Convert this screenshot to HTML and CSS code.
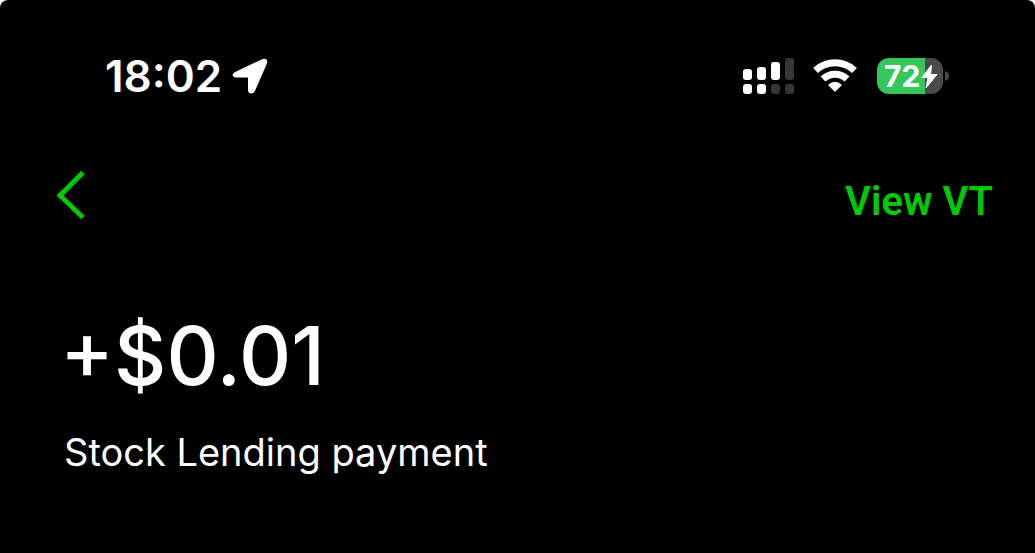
FILE: index.html
```html
<!doctype html>
<html lang="en">
<head>
	<title>Stock Lending payment</title>

	<meta charset="utf-8" />
	<meta name="viewport" content="width=device-width, initial-scale=1" />

	<link rel="stylesheet" href="styles.css">
</head>

<body>
	<div class="screen">
		<div class="statusbar">
			<div class="clock">
				<span>18:02</span>
				<svg class="location" width="36" height="36" viewBox="0 0 36 36" aria-hidden="true">
					<path d="M3.500 16 31 3Q34 2 33 5L21 32.500Q19 34.500 18 32.500V19Q18 17.500 16.500 17.500H4Q1.500 17.500 3.500 16Z" fill="#fff" stroke="#fff" stroke-width="4" stroke-linejoin="round"/>
				</svg>
			</div>

			<div class="indicators">
				<!-- two sim cards: bars on top, dots below -->
				<svg class="signal" width="51" height="36" viewBox="0 0 51 36" role="img" aria-label="Signal">
					<g fill="#fff">
						<rect x="0" y="11" width="9" height="11" rx="3"/>
						<rect x="14" y="9" width="9" height="13" rx="3"/>
						<rect x="28" y="4" width="9" height="18" rx="3"/>
						<rect x="0" y="26" width="9" height="10" rx="3"/>
						<rect x="14" y="26" width="9" height="10" rx="3"/>
					</g>
					<g fill="#363636">
						<rect x="42" y="0" width="9" height="22" rx="3"/>
						<rect x="28" y="26" width="9" height="10" rx="3"/>
						<rect x="42" y="26" width="9" height="10" rx="3"/>
					</g>
				</svg>

				<svg class="wifi" width="45" height="34" viewBox="0 0 45 34" role="img" aria-label="Wi-Fi">
					<g fill="none" stroke="#fff" stroke-width="7">
						<path d="M2.500 11.500A28.500 28.500 0 0 1 41.500 11.500"/>
						<path d="M10 20A17.500 17.500 0 0 1 34 20"/>
					</g>
					<path d="M15 26Q22 19.500 29 26L22.700 32.300Q22 33 21.300 32.300Z" fill="#fff"/>
				</svg>

				<div class="battery">
					<div class="level">
						<span>72</span>
						<svg class="bolt" width="18" height="26" viewBox="0 0 18 26" aria-hidden="true">
							<path d="M11.500 2 2 14.500H8L6 25 17 11.500H10.500Z" fill="#fff" stroke="#fff" stroke-width="1" stroke-linejoin="round"/>
						</svg>
					</div>
					<svg width="4" height="12" viewBox="0 0 4 12" aria-hidden="true">
						<path d="M0 1Q4 2 4 6T0 11Z" fill="#4a4a4c"/>
					</svg>
				</div>
			</div>
		</div>

		<div class="navbar">
			<button class="back" type="button" aria-label="Back">
				<svg width="30" height="50" viewBox="0 0 30 50" aria-hidden="true">
					<path d="M27 2.500 4 25.500 27 47.500" fill="none" stroke="#00c805" stroke-width="5"/>
				</svg>
			</button>
			<a class="view" href="#">View VT</a>
		</div>

		<div class="payment">
			<h1>+$0.01</h1>
			<p>Stock Lending payment</p>
		</div>
	</div>
</body>
</html>
```
FILE: styles.css
```css
html {
	background-color:white;
}

body {
	font-family:Inter, "Liberation Sans", sans-serif;
	color:white;
	margin:0;
}

.screen {
	box-sizing:border-box;
	min-height:100vh;
	padding-top:48px;
	background-color:black;
	border-radius:8px 8px 0 0;
}

.statusbar {
	display:flex;
	justify-content:space-between;
	align-items:center;
	height:56px;
	padding:0 86px 0 105px;
}

.clock {
	display:flex;
	align-items:center;
	gap:10px;
	font-size:44px;
	font-weight:600;
	line-height:56px;
}

.indicators {
	display:flex;
	align-items:center;
	gap:19px;
}

.battery {
	display:flex;
	align-items:center;
	gap:2px;
}

.level {
	display:flex;
	align-items:center;
	box-sizing:border-box;
	width:66px;
	height:36px;
	padding-left:7px;
	border-radius:12px;
	background:linear-gradient(to right, #34c759 72%, #4a4a4c 72%);
	font-size:30px;
	font-weight:700;
	line-height:36px;
}

.bolt {
	flex:none;
}

.navbar {
	display:flex;
	justify-content:space-between;
	align-items:center;
	padding:60px 42px 0 56px;
}

.back {
	padding:0;
	border:0;
	background:none;
	cursor:pointer;
}

.back svg {
	display:block;
}

.view {
	padding-top:14px;
	color:#00c805;
	font-family:Roboto, Inter, sans-serif;
	font-size:40px;
	font-weight:600;
	line-height:48px;
	text-decoration:none;
}

.payment {
	padding:80px 64px 0;
}

.payment h1 {
	margin:0 0 0 -4px;
	font-size:81px;
	font-weight:500;
	line-height:100px;
}

.payment p {
	margin:22px 0 0;
	font-size:38px;
	line-height:48px;
}
```
